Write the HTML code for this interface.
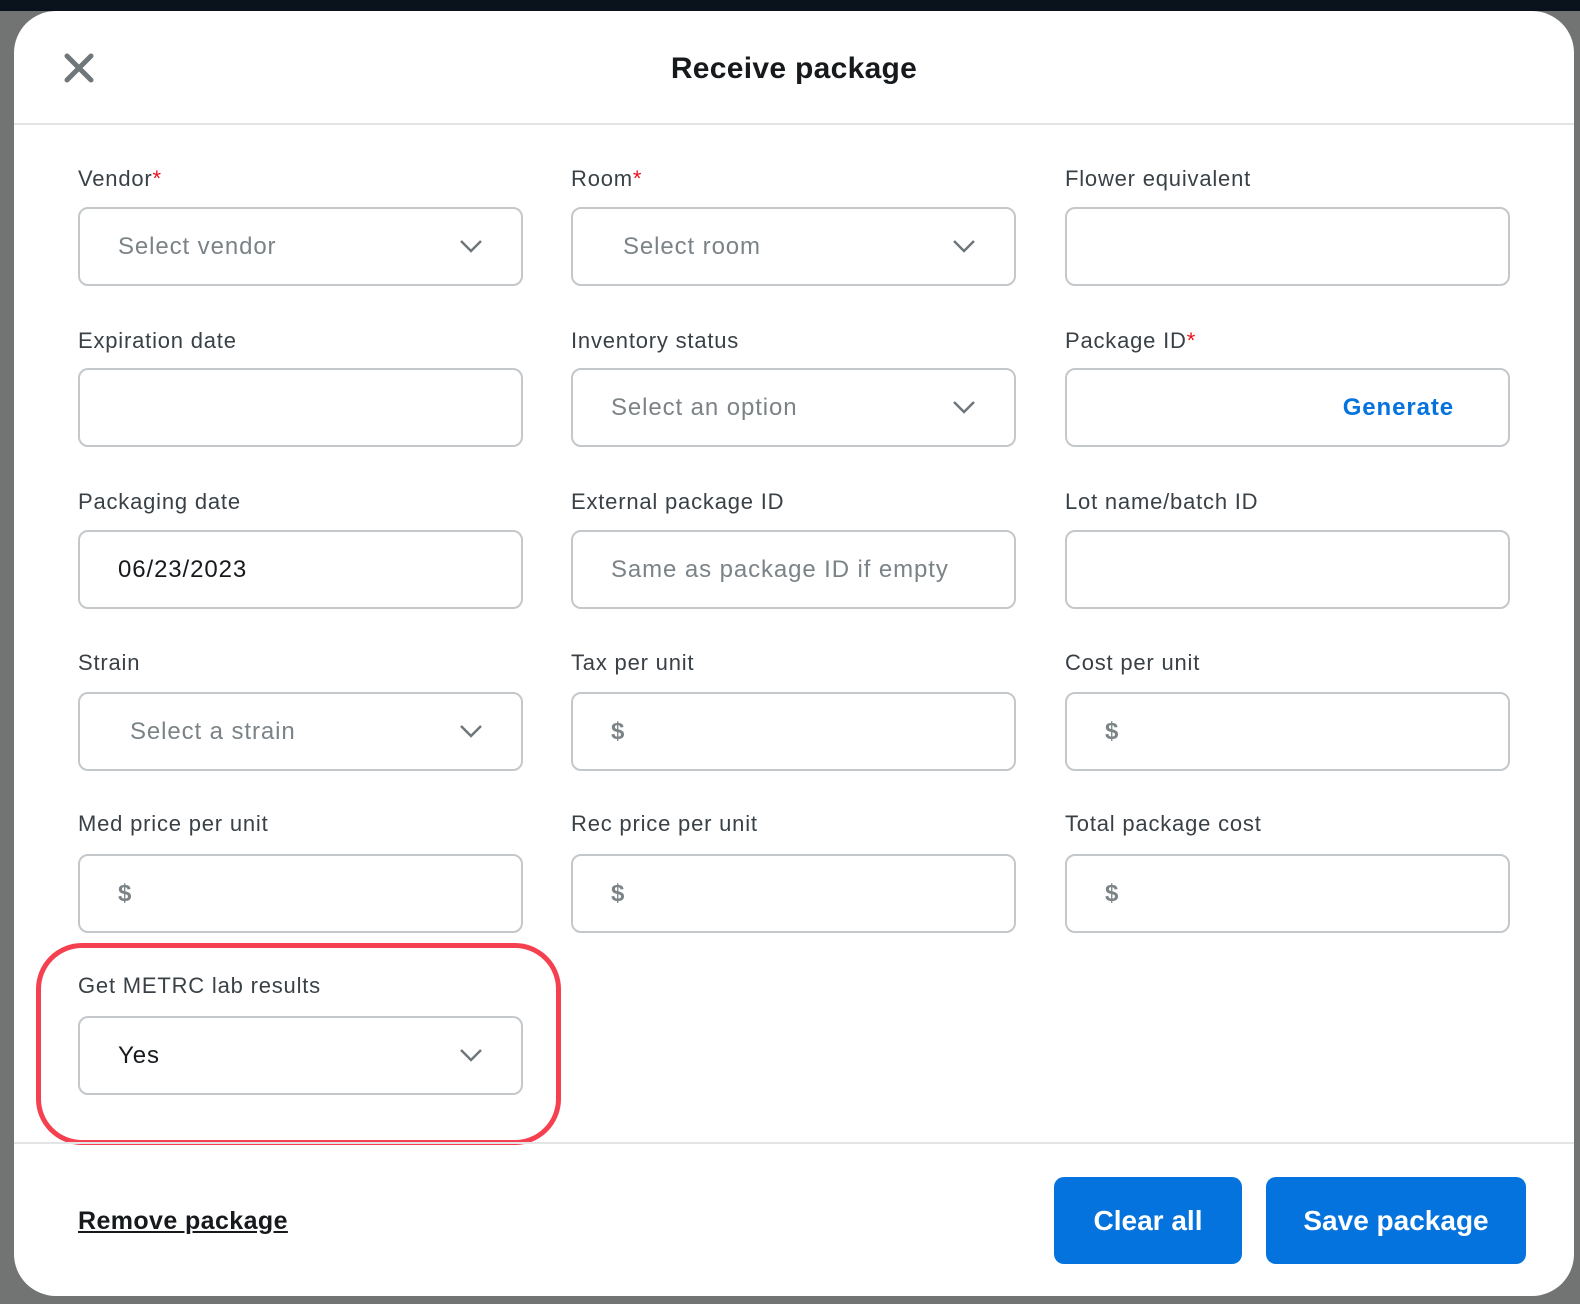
<!DOCTYPE html>
<html><head><meta charset="utf-8"><style>
*{box-sizing:border-box;margin:0;padding:0}
body{width:1580px;height:1304px;background:#727373;position:relative;overflow:hidden;font-family:"Liberation Sans",sans-serif}
.top{position:absolute;left:0;top:0;width:1580px;height:11px;background:#0a121c}
.modal{position:absolute;left:14px;top:11px;width:1560px;height:1285px;background:#fff;border-radius:42px;overflow:hidden}
.hd{position:absolute;left:0;top:112px;width:100%;height:2px;background:#e2e4e5}
.ft{position:absolute;left:0;top:1131px;width:100%;height:2px;background:#e2e4e5}
.title{position:absolute;left:0;width:100%;top:41px;text-align:center;font-size:30px;font-weight:bold;color:#161a1d;letter-spacing:0.3px}
.lbl{position:absolute;font-size:22px;color:#3a4146;letter-spacing:0.8px}
.lbl b{color:#e8101b;font-weight:normal}
.in{position:absolute;width:445px;height:79px;border:2px solid #c4c8cb;border-radius:10px;font-size:24px;color:#7b8387;display:flex;align-items:center;letter-spacing:0.9px}
.in.v{color:#161a1d}
.chev{position:absolute;right:38px;top:30px}
.btn{position:absolute;top:1166px;height:87px;background:#0573de;color:#fff;font-weight:bold;font-size:28px;border-radius:10px;display:flex;align-items:center;justify-content:center}
.red{position:absolute;left:22px;top:932px;width:525px;height:202px;border:5px solid #f5404f;border-radius:46px}
</style></head><body>
<div class="top"></div>
<div class="modal">
<svg style="position:absolute;left:50px;top:42px" width="30" height="30" viewBox="0 0 30 30"><path d="M3 3L27 27M27 3L3 27" stroke="#6f777b" stroke-width="5" stroke-linecap="round"/></svg>
<div class="title">Receive package</div>
<div class="hd"></div>

<div class="lbl" style="left:64px;top:155px">Vendor<b>*</b></div>
<div class="lbl" style="left:557px;top:155px">Room<b>*</b></div>
<div class="lbl" style="left:1051px;top:155px">Flower equivalent</div>
<div class="in" style="left:64px;top:196px;padding-left:38px">Select vendor<svg class="chev" width="24" height="14"><path d="M2 2L12 12L22 2" stroke="#6f777b" stroke-width="2.5" fill="none"/></svg></div>
<div class="in" style="left:557px;top:196px;padding-left:50px">Select room<svg class="chev" width="24" height="14"><path d="M2 2L12 12L22 2" stroke="#6f777b" stroke-width="2.5" fill="none"/></svg></div>
<div class="in" style="left:1051px;top:196px"></div>

<div class="lbl" style="left:64px;top:317px">Expiration date</div>
<div class="lbl" style="left:557px;top:317px">Inventory status</div>
<div class="lbl" style="left:1051px;top:317px">Package ID<b>*</b></div>
<div class="in" style="left:64px;top:357px"></div>
<div class="in" style="left:557px;top:357px;padding-left:38px">Select an option<svg class="chev" width="24" height="14"><path d="M2 2L12 12L22 2" stroke="#6f777b" stroke-width="2.5" fill="none"/></svg></div>
<div class="in" style="left:1051px;top:357px;justify-content:flex-end;padding-right:54px;color:#0573de;font-weight:bold">Generate</div>

<div class="lbl" style="left:64px;top:478px">Packaging date</div>
<div class="lbl" style="left:557px;top:478px">External package ID</div>
<div class="lbl" style="left:1051px;top:478px">Lot name/batch ID</div>
<div class="in v" style="left:64px;top:519px;padding-left:38px">06/23/2023</div>
<div class="in" style="left:557px;top:519px;padding-left:38px">Same as package ID if empty</div>
<div class="in" style="left:1051px;top:519px"></div>

<div class="lbl" style="left:64px;top:639px">Strain</div>
<div class="lbl" style="left:557px;top:639px">Tax per unit</div>
<div class="lbl" style="left:1051px;top:639px">Cost per unit</div>
<div class="in" style="left:64px;top:681px;padding-left:50px">Select a strain<svg class="chev" width="24" height="14"><path d="M2 2L12 12L22 2" stroke="#6f777b" stroke-width="2.5" fill="none"/></svg></div>
<div class="in" style="left:557px;top:681px;padding-left:38px;font-weight:bold">$</div>
<div class="in" style="left:1051px;top:681px;padding-left:38px;font-weight:bold">$</div>

<div class="lbl" style="left:64px;top:800px">Med price per unit</div>
<div class="lbl" style="left:557px;top:800px">Rec price per unit</div>
<div class="lbl" style="left:1051px;top:800px">Total package cost</div>
<div class="in" style="left:64px;top:843px;padding-left:38px;font-weight:bold">$</div>
<div class="in" style="left:557px;top:843px;padding-left:38px;font-weight:bold">$</div>
<div class="in" style="left:1051px;top:843px;padding-left:38px;font-weight:bold">$</div>

<div class="red"></div>
<div class="lbl" style="left:64px;top:962px">Get METRC lab results</div>
<div class="in v" style="left:64px;top:1005px;padding-left:38px">Yes<svg class="chev" width="24" height="14"><path d="M2 2L12 12L22 2" stroke="#6f777b" stroke-width="2.5" fill="none"/></svg></div>

<div class="ft"></div>
<div style="position:absolute;left:64px;top:1196px;font-size:25px;font-weight:bold;color:#161a1d;text-decoration:underline;letter-spacing:0.4px">Remove package</div>
<div class="btn" style="left:1040px;width:188px">Clear all</div>
<div class="btn" style="left:1252px;width:260px">Save package</div>
</div>
</body></html>
